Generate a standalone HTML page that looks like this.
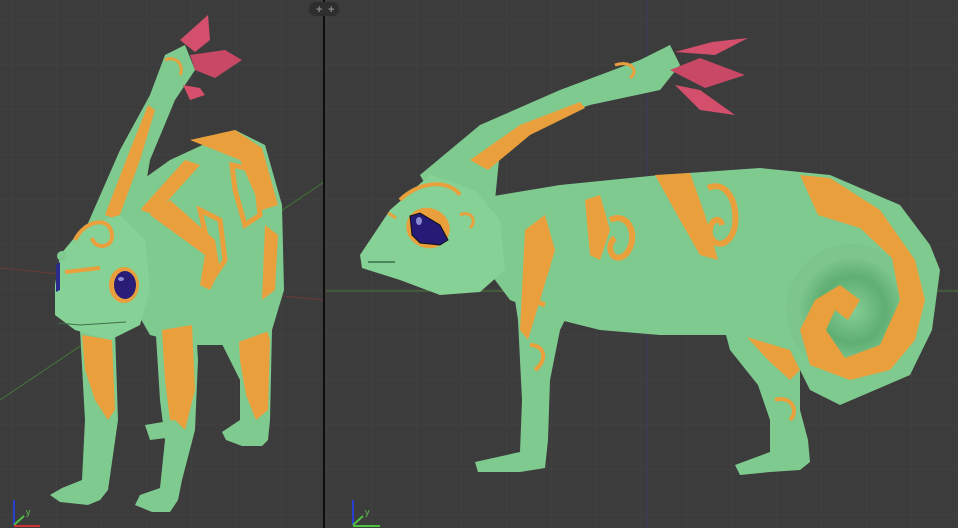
<!DOCTYPE html>
<html><head><meta charset="utf-8"><style>
html,body{margin:0;padding:0;background:#3c3c3c;width:958px;height:528px;overflow:hidden}
svg{display:block}
</style></head><body>
<svg width="958" height="528" viewBox="0 0 958 528" xmlns="http://www.w3.org/2000/svg">
<defs>
<pattern id="g" width="45" height="45" patternUnits="userSpaceOnUse" x="12" y="20">
<path d="M45 0V45M0 45H45" stroke="#434343" stroke-width="1" fill="none"/>
</pattern>
<radialGradient id="sp" cx="0.5" cy="0.5" r="0.5">
<stop offset="0" stop-color="#86cf95"/><stop offset="0.5" stop-color="#5fae72"/><stop offset="0.8" stop-color="#7cc58c"/><stop offset="1" stop-color="#7cc58c"/>
</radialGradient>
</defs>
<rect width="958" height="528" fill="#3c3c3c"/>
<rect width="958" height="528" fill="url(#g)"/>
<!-- axes -->
<line x1="326" y1="291" x2="958" y2="291" stroke="#4a7a3a" stroke-width="1"/>
<line x1="647" y1="0" x2="647" y2="528" stroke="#3d3d60" stroke-width="1"/>
<line x1="0" y1="400" x2="324" y2="182" stroke="#3f7a35" stroke-width="1"/>
<line x1="0" y1="268" x2="324" y2="300" stroke="#6a3a3a" stroke-width="1"/>
<line x1="222" y1="290" x2="278" y2="296" stroke="#222" stroke-width="1.2"/>
<!-- divider -->
<rect x="323" y="0" width="2" height="528" fill="#0d0d0d"/>
<rect x="309" y="2" width="30" height="14" rx="6" fill="#2e2e2e"/>
<text x="316" y="13" font-family="Liberation Sans,sans-serif" font-size="11" font-weight="bold" fill="#8a8a8a">+</text>
<text x="328" y="13" font-family="Liberation Sans,sans-serif" font-size="11" font-weight="bold" fill="#8a8a8a">+</text>

<!-- ===== LEFT CHAMELEON ===== -->
<g>
<!-- back legs -->
<path d="M212 320 L232 300 L268 300 L272 330 L270 420 L268 440 L262 446 L242 446 L226 440 L222 432 L240 420 L240 380 L220 340 Z" fill="#7fcb8f"/>
<path d="M238 320 L262 315 L270 340 L268 410 L256 420 L246 395 L240 360 Z" fill="#e9a03c"/>
<!-- body -->
<path d="M135 185 L170 160 L235 130 L265 145 L282 205 L284 290 L272 330 L230 345 L190 345 L150 335 L130 300 L125 240 Z" fill="#7fcb8f"/>
<path d="M190 140 L235 130 L262 148 L278 205 L262 210 L240 160 Z" fill="#e9a03c"/>
<path d="M140 210 L185 160 L200 165 L155 215 Z" fill="#e9a03c"/>
<path d="M150 215 L170 200 L215 240 L220 270 L210 290 L200 285 L205 255 Z" fill="#e9a03c"/>
<path d="M200 210 L220 220 L225 260 L215 275 Z" fill="none" stroke="#e9a03c" stroke-width="5"/>
<path d="M232 165 L255 170 L260 215 L245 225 L235 190 Z" fill="none" stroke="#e9a03c" stroke-width="5"/>
<path d="M265 225 L278 235 L275 290 L262 300 Z" fill="#e9a03c"/>
<!-- front leg (center) -->
<path d="M155 320 L195 310 L198 360 L195 430 L182 480 L178 500 L170 512 L152 512 L135 505 L140 495 L160 488 L165 440 L160 400 Z" fill="#7fcb8f"/>
<path d="M162 330 L192 325 L195 390 L185 430 L170 420 L165 380 Z" fill="#e9a03c"/>
<path d="M145 425 L175 420 L190 435 L150 440 Z" fill="#7fcb8f"/>
<!-- front leg (left) -->
<path d="M80 330 L115 330 L118 420 L108 490 L100 500 L88 505 L60 502 L50 495 L62 488 L82 480 L85 420 Z" fill="#7fcb8f"/>
<path d="M82 335 L112 340 L115 410 L108 420 L95 400 L85 370 Z" fill="#e9a03c"/>
<!-- crest -->
<path d="M85 230 L120 150 L150 95 L165 55 L185 45 L195 70 L175 100 L150 160 L138 230 L115 250 Z" fill="#7fcb8f"/>
<path d="M105 215 L130 150 L148 105 L155 110 L140 160 L118 220 Z" fill="#e9a03c"/>
<path d="M165 60 C175 55 185 65 180 75" stroke="#e9a03c" stroke-width="3" fill="none"/>
<!-- flower -->
<path d="M180 40 L208 15 L210 40 L195 52 Z" fill="#d34f6c"/>
<path d="M190 55 L225 50 L242 60 L215 78 L195 70 Z" fill="#c84865"/>
<path d="M183 85 L200 88 L205 95 L190 100 Z" fill="#d34f6c"/>
<!-- head -->
<path d="M60 255 L85 225 L120 215 L145 240 L150 290 L140 325 L110 340 L75 330 L55 315 L55 285 Z" fill="#86d195"/>
<path d="M75 240 C85 220 110 215 112 235 C113 248 95 250 92 238" stroke="#e9a03c" stroke-width="4" fill="none"/>
<path d="M65 272 L100 268" stroke="#e9a03c" stroke-width="4"/>
<circle cx="62" cy="256" r="5" fill="#7fcb8f"/>
<path d="M56 265 L60 262 L60 290 L56 292 Z" fill="#2a2b8a"/>
<ellipse cx="124" cy="285" rx="15" ry="18" fill="#e9a03c"/>
<ellipse cx="125" cy="285" rx="11" ry="14" fill="#2a1d78"/>
<ellipse cx="121" cy="279" rx="3" ry="2" fill="#8a8ad0"/>
<path d="M58 323 L80 325 L126 322" stroke="#3f6e4a" stroke-width="1" fill="none"/>
</g>

<!-- ===== RIGHT CHAMELEON ===== -->
<g>
<!-- back leg -->
<path d="M722 320 L785 320 L800 360 L800 410 L808 440 L810 462 L800 470 L770 472 L740 475 L735 465 L770 452 L770 420 L758 385 L730 350 Z" fill="#7fcb8f"/>
<path d="M730 290 L770 280 L790 330 L800 370 L790 380 L768 360 L745 335 Z" fill="#e9a03c"/>
<path d="M775 400 C790 395 800 410 790 420" stroke="#e9a03c" stroke-width="4" fill="none"/>
<!-- body -->
<path d="M470 200 L560 185 L660 175 L760 168 L830 175 L900 205 L930 245 L940 270 L932 330 L910 375 L840 405 L810 390 L790 350 L740 335 L660 335 L600 330 L560 320 L510 300 L480 260 Z" fill="#7fcb8f"/>
<!-- tail spiral -->
<circle cx="852" cy="310" r="66" fill="url(#sp)"/>
<path d="M800 175 L830 178 L880 210 L915 260 L925 300 L915 340 L890 370 L850 380 L810 365 L800 330 L815 300 L840 285 L860 300 L848 320 L835 310 L826 330 L845 358 L880 345 L900 300 L892 258 L860 228 L818 215 Z" fill="#e9a03c"/>
<path d="M655 175 L690 173 L705 215 L718 260 L700 255 L680 220 Z" fill="#e9a03c"/>
<path d="M708 188 C725 180 738 200 735 225 C732 245 715 250 710 235 C708 220 720 215 722 225" stroke="#e9a03c" stroke-width="6" fill="none"/>
<path d="M585 200 L600 195 L610 230 L600 260 L590 255 Z" fill="#e9a03c"/>
<path d="M610 220 C630 210 640 240 625 255 C612 265 605 245 615 238" stroke="#e9a03c" stroke-width="6" fill="none"/>
<!-- front leg -->
<path d="M520 240 L565 230 L580 290 L560 330 L550 380 L548 440 L545 468 L520 472 L478 472 L475 462 L520 452 L522 400 L518 320 L512 280 Z" fill="#7fcb8f"/>
<path d="M525 230 L545 215 L555 250 L540 300 L528 340 L520 330 Z" fill="#e9a03c"/>
<path d="M532 250 C548 245 555 265 540 280 C530 290 530 300 545 305" stroke="#e9a03c" stroke-width="5" fill="none"/>
<path d="M530 345 C545 345 548 360 535 370" stroke="#e9a03c" stroke-width="4" fill="none"/>
<!-- crest -->
<path d="M420 175 L480 125 L560 90 L640 60 L670 45 L680 65 L660 90 L590 105 L530 125 L500 150 L495 200 L440 210 Z" fill="#7fcb8f"/>
<path d="M470 160 L520 125 L580 102 L585 108 L530 135 L488 170 Z" fill="#e9a03c"/>
<path d="M615 65 C630 60 640 70 630 78" stroke="#e9a03c" stroke-width="3" fill="none"/>
<!-- flower -->
<path d="M675 52 L712 42 L748 38 L715 55 Z" fill="#d34f6c"/>
<path d="M670 70 L700 58 L745 75 L705 88 Z" fill="#c84865"/>
<path d="M675 85 L700 90 L735 115 L700 110 Z" fill="#d34f6c"/>
<!-- head -->
<path d="M360 255 L390 210 L430 175 L475 190 L500 220 L505 270 L480 292 L440 295 L400 280 L362 268 Z" fill="#86d195"/>
<path d="M400 200 C420 180 450 180 460 195" stroke="#e9a03c" stroke-width="4" fill="none"/>
<path d="M388 213 L396 218" stroke="#e9a03c" stroke-width="3"/>
<ellipse cx="428" cy="228" rx="22" ry="20" fill="#e9a03c" transform="rotate(20 428 228)"/>
<path d="M410 216 L420 213 L440 225 L448 240 L440 245 L420 243 L412 235 Z" fill="#251a75" stroke="#111" stroke-width="1"/>
<ellipse cx="419" cy="221" rx="3" ry="4" fill="#8a8ad0"/>
<path d="M460 215 C470 210 478 220 470 228" stroke="#e9a03c" stroke-width="3" fill="none"/>
<path d="M368 262 L395 262" stroke="#2e5a3a" stroke-width="1.2"/>
</g>

<!-- axis gizmos -->
<g font-family="Liberation Sans,sans-serif" font-size="9">
<line x1="14" y1="525" x2="14" y2="500" stroke="#2a3fd0" stroke-width="2"/>
<line x1="14" y1="525" x2="24" y2="516" stroke="#50c040" stroke-width="2"/>
<line x1="14" y1="526" x2="40" y2="526" stroke="#d03030" stroke-width="2"/>
<text x="26" y="515" fill="#60c050">y</text>
<line x1="353" y1="525" x2="353" y2="500" stroke="#2a3fd0" stroke-width="2"/>
<line x1="353" y1="525" x2="363" y2="516" stroke="#50c040" stroke-width="2"/>
<line x1="353" y1="526" x2="380" y2="526" stroke="#50c040" stroke-width="2"/>
<text x="365" y="515" fill="#60c050">y</text>
</g>
</svg>
</body></html>
